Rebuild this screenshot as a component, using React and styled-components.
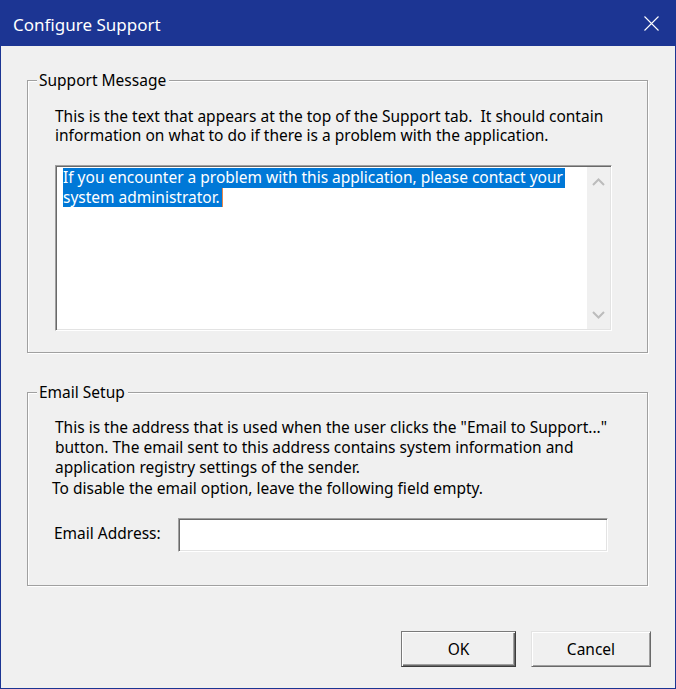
import React from 'react';
import styled, { createGlobalStyle } from 'styled-components';

const FONT = `"Noto Sans", "Open Sans", "Liberation Sans", sans-serif`;

const Global = createGlobalStyle`
  html, body { margin: 0; padding: 0; background: #f0f0f0; }
  body { font-family: ${FONT}; }
`;

const Window = styled.div`
  width: 676px;
  height: 689px;
  box-sizing: border-box;
  border: 1px solid #1c3593;
  border-top: none;
  background: #f0f0f0;
  display: flex;
  flex-direction: column;
  font-family: ${FONT};
  font-size: 15.5px;
  color: #000;
  overflow: hidden;
`;

const TitleBar = styled.div`
  height: 46px;
  flex: none;
  margin: 0 -1px;
  background: #1c3593;
  color: #fff;
  display: flex;
  align-items: center;
  justify-content: space-between;
  padding: 0 17px 0 13px;
  font-size: 17px;
`;

const Title = styled.span`
  padding-top: 2px;
`;

const CloseIcon = styled.svg`
  width: 15px;
  height: 15px;
  display: block;
`;

const Content = styled.div`
  flex: 1;
  display: flex;
  flex-direction: column;
  padding: 0 27px 0 26px;
`;

const GroupBox = styled.fieldset`
  margin: ${(p) => p.$top}px 0 0;
  padding: 0;
  min-width: 0;
  border: 1px solid #a0a0a0;
  box-shadow: 1px 1px 0 #fff, inset 1px 1px 0 #fff;
`;

const Legend = styled.legend`
  margin-left: 9px;
  padding: 0 3px 0 2px;
  line-height: 19px;
  background: #f0f0f0;
`;

const GroupBody = styled.div`
  padding: ${(p) => p.$pad};
`;

const TextBlock = styled.div`
  line-height: ${(p) => p.$lh || 19}px;
  white-space: pre;
  margin: ${(p) => p.$margin || '0'};
`;

const Sunken = styled.div`
  box-sizing: border-box;
  border: 1px solid;
  border-color: #a0a0a0 #fff #fff #a0a0a0;
  box-shadow: inset 1px 1px 0 #696969, inset -1px -1px 0 #e3e3e3;
  background: #fff;
  padding: 1px;
`;

const EditBox = styled(Sunken)`
  width: 557px;
  height: 166px;
  margin-top: 20px;
  display: flex;
`;

const EditText = styled.div`
  flex: 1;
  padding: 1px 0 0 6px;
  background: #fff;
`;

const SelLine = styled.div`
  line-height: 19.5px;
  white-space: pre;
  display: flex;
  align-items: stretch;
`;

const Selected = styled.span`
  display: inline-block;
  background: #0078d7;
  color: #fff;
  padding-right: 2px;
`;

const Caret = styled.span`
  display: inline-block;
  width: 1px;
  background: #e8874a;
`;

const ScrollBar = styled.div`
  width: 23px;
  flex: none;
  background: #f0f0f0;
  display: flex;
  flex-direction: column;
  justify-content: space-between;
`;

const ArrowBox = styled.div`
  height: 29px;
  display: flex;
  align-items: center;
  justify-content: center;
`;

const FieldRow = styled.div`
  display: flex;
  align-items: center;
  margin: 20px 0 0 -1px;
`;

const FieldLabel = styled.label`
  width: 124px;
  flex: none;
  line-height: 19px;
  margin-top: -4px;
`;

const TextInput = styled(Sunken)`
  width: 430px;
  height: 34px;
`;

const ButtonRow = styled.div`
  display: flex;
  justify-content: flex-end;
  gap: 15px;
  margin: 45px -3px 0 0;
`;

const Button = styled.button`
  width: ${(p) => p.$w}px;
  height: 36px;
  box-sizing: border-box;
  background: #f0f0f0;
  font-family: ${FONT};
  font-size: 15.5px;
  color: #000;
  padding: 0;
  border: 1px solid;
  border-color: ${(p) => (p.$default ? '#7a7a7a #3c3c3c #3c3c3c #7a7a7a' : '#e3e3e3 #696969 #696969 #e3e3e3')};
  box-shadow: ${(p) =>
    p.$default
      ? 'inset 1px 1px 0 #fff, inset -1px -1px 0 #696969, inset -2px -2px 0 #a0a0a0'
      : 'inset 1px 1px 0 #fff, inset -1px -1px 0 #a0a0a0'};
`;

const Chevron = ({ up }) => (
  <svg width="13" height="8" viewBox="0 0 13 8">
    <polyline
      points={up ? '1,7 6.5,1.5 12,7' : '1,1 6.5,6.5 12,1'}
      fill="none"
      stroke="#bcbcbc"
      strokeWidth="2"
    />
  </svg>
);

export default function App() {
  return (
    <>
      <Global />
      <Window>
        <TitleBar>
          <Title>Configure Support</Title>
          <CloseIcon viewBox="0 0 15 15">
            <path d="M0.5 0.5 L14.5 14.5 M14.5 0.5 L0.5 14.5" stroke="#fff" strokeWidth="1.1" />
          </CloseIcon>
        </TitleBar>
        <Content>
          <GroupBox $top={25}>
            <Legend>Support Message</Legend>
            <GroupBody $pad="17px 0 21px 27px">
              <TextBlock>{'This is the text that appears at the top of the Support tab.  It should contain'}</TextBlock>
              <TextBlock>information on what to do if there is a problem with the application.</TextBlock>
              <EditBox>
                <EditText>
                  <SelLine>
                    <Selected>If you encounter a problem with this application, please contact your</Selected>
                  </SelLine>
                  <SelLine>
                    <Selected>system administrator.</Selected>
                    <Caret />
                  </SelLine>
                </EditText>
                <ScrollBar>
                  <ArrowBox><Chevron up /></ArrowBox>
                  <ArrowBox><Chevron /></ArrowBox>
                </ScrollBar>
              </EditBox>
            </GroupBody>
          </GroupBox>
          <GroupBox $top={30}>
            <Legend>Email Setup</Legend>
            <GroupBody $pad="15px 0 33px 27px">
              <TextBlock $lh={20}>This is the address that is used when the user clicks the "Email to Support..."</TextBlock>
              <TextBlock $lh={20}>button. The email sent to this address contains system information and</TextBlock>
              <TextBlock $lh={20}>application registry settings of the sender.</TextBlock>
              <TextBlock $lh={20} $margin="1px 0 1px -3px">To disable the email option, leave the following field empty.</TextBlock>
              <FieldRow>
                <FieldLabel>Email Address:</FieldLabel>
                <TextInput />
              </FieldRow>
            </GroupBody>
          </GroupBox>
          <ButtonRow>
            <Button $w={115} $default>OK</Button>
            <Button $w={120}>Cancel</Button>
          </ButtonRow>
        </Content>
      </Window>
    </>
  );
}
